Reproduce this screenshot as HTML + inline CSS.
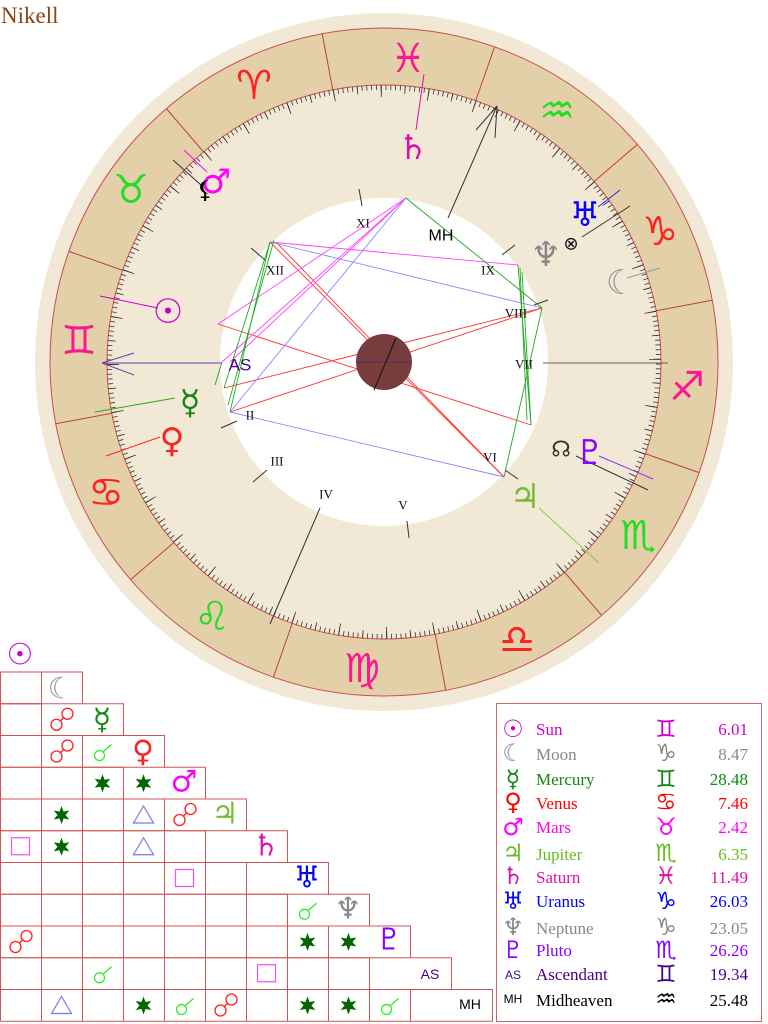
<!DOCTYPE html>
<html><head><meta charset="utf-8"><style>
html,body{margin:0;padding:0;background:#fff;width:768px;height:1024px;overflow:hidden}
svg{display:block}
.g{font-family:"DejaVu Sans",sans-serif;text-anchor:middle;dominant-baseline:central}
.r{font-family:"Liberation Serif",serif;font-size:13px;text-anchor:middle;dominant-baseline:central;fill:#111}
.t{font-family:"Liberation Serif",serif;font-size:17px}
</style></head><body>
<svg width="768" height="1024" viewBox="0 0 768 1024" xmlns="http://www.w3.org/2000/svg">
<text x="1" y="23" font-family="Liberation Serif,serif" font-size="23" fill="#8b4513">Nikell</text>

<g transform="translate(384,362)">
 <circle r="349" fill="#f2e8d6"/>
 <circle r="334" fill="#e3cfa8" stroke="#c85050" stroke-width="1"/>
 <circle r="277" fill="#f2e8d6" stroke="#c85050" stroke-width="1"/>
 <circle r="164" fill="#fff"/>
 <g transform="rotate(-100.66)" fill="none" stroke="#333">
  <circle r="274.5" stroke-width="5" stroke-dasharray="0.8 3.991"/>
  <circle r="273" stroke-width="8" stroke-dasharray="0.8 23.024"/>
  <circle r="271" stroke-width="12" stroke-dasharray="0.8 46.498"/>
 </g>
 <g stroke="#c04040" stroke-width="1">
  <line x1="277" x2="334" transform="rotate(-100.66)"/>
  <line x1="277" x2="334" transform="rotate(-130.66)"/>
  <line x1="277" x2="334" transform="rotate(-160.66)"/>
  <line x1="277" x2="334" transform="rotate(-190.66)"/>
  <line x1="277" x2="334" transform="rotate(-220.66)"/>
  <line x1="277" x2="334" transform="rotate(-250.66)"/>
  <line x1="277" x2="334" transform="rotate(-280.66)"/>
  <line x1="277" x2="334" transform="rotate(-310.66)"/>
  <line x1="277" x2="334" transform="rotate(-340.66)"/>
  <line x1="277" x2="334" transform="rotate(-10.66)"/>
  <line x1="277" x2="334" transform="rotate(-40.66)"/>
  <line x1="277" x2="334" transform="rotate(-70.66)"/>
 </g>
</g>

<!-- sign glyphs -->
<g class="g" font-size="40" font-weight="normal">
 <text x="254" y="86" fill="#ff2020">♈︎</text>
 <text x="131" y="190" fill="#22dd22">♉︎</text>
 <text x="79" y="341" fill="#ff1493">♊︎</text>
 <text x="106" y="493" fill="#ff2020">♋︎</text>
 <text x="212" y="617" fill="#22dd22">♌︎</text>
 <text x="362" y="669" fill="#ff1493">♍︎</text>
 <text x="517" y="640" fill="#ff2020">♎︎</text>
 <text x="638" y="536" fill="#22dd22">♏︎</text>
 <text x="687" y="387" fill="#ff1493">♐︎</text>
 <text x="660" y="232" fill="#ff2020">♑︎</text>
 <text x="557" y="111" fill="#22dd22">♒︎</text>
 <text x="408" y="59" fill="#ff1493">♓︎</text>
</g>

<!-- aspect lines -->
<g stroke-width="0.9" fill="none">
 <g stroke="#ff3030">
  <line x1="542" y1="308" x2="224" y2="388"/>
  <line x1="542" y1="308" x2="230" y2="412"/>
  <line x1="504" y1="477" x2="270" y2="242"/>
  <line x1="531" y1="425" x2="218" y2="324"/>
  <line x1="504" y1="477" x2="276" y2="242"/>
 </g>
 <g stroke="#ff44ff">
  <line x1="406" y1="198" x2="218" y2="324"/>
  <line x1="270" y1="242" x2="518" y2="265"/>
  <line x1="406" y1="198" x2="222" y2="362"/>
  <line x1="406" y1="198" x2="230" y2="362"/>
 </g>
 <g stroke="#8888ff">
  <line x1="504" y1="477" x2="230" y2="412"/>
  <line x1="406" y1="198" x2="230" y2="412"/>
  <line x1="270" y1="242" x2="542" y2="308"/>
 </g>
 <g stroke="#22aa22">
  <line x1="270" y1="242" x2="224" y2="388"/>
  <line x1="270" y1="242" x2="230" y2="412"/>
  <line x1="274" y1="240" x2="228" y2="405"/>
  <line x1="504" y1="477" x2="542" y2="308"/>
  <line x1="406" y1="198" x2="542" y2="308"/>
  <line x1="531" y1="425" x2="518" y2="265"/>
  <line x1="531" y1="425" x2="522" y2="272"/>
  <line x1="527" y1="420" x2="520" y2="268"/>
  <line x1="215" y1="385" x2="222" y2="362"/>
 </g>
</g>
<circle cx="384" cy="362" r="28" fill="#783c3c"/>
<g stroke="#5a2a6a" stroke-width="1"><line x1="356" y1="362" x2="412" y2="362"/></g>
<line x1="374" y1="390" x2="396" y2="338" stroke="#111" stroke-width="1"/>

<!-- house cusps -->
<g stroke="#333" stroke-width="1">
 <line x1="102" y1="363" x2="222" y2="363" stroke="#6040a0"/>
 <line x1="102" y1="363" x2="134" y2="353" stroke="#6040a0"/>
 <line x1="102" y1="363" x2="134" y2="375" stroke="#6040a0"/>
 <line x1="497" y1="106" x2="448" y2="218"/>
 <line x1="497" y1="106" x2="476" y2="130"/>
 <line x1="497" y1="106" x2="495" y2="138"/>
 <line x1="543" y1="363" x2="668" y2="363" stroke="#666"/>
 <line x1="320" y1="508" x2="270" y2="624"/>
 <line x1="359" y1="189" x2="362" y2="206"/>
 <line x1="251" y1="248" x2="265" y2="260"/>
 <line x1="221" y1="428" x2="237" y2="421"/>
 <line x1="253" y1="482" x2="267" y2="470"/>
 <line x1="407" y1="521" x2="409" y2="538"/>
 <line x1="505" y1="470" x2="518" y2="479"/>
 <line x1="534" y1="305" x2="548" y2="300"/>
 <line x1="502" y1="255" x2="515" y2="245"/>
</g>
<g class="r">
 <text x="363" y="223">XI</text><text x="275" y="270">XII</text>
 <text x="250" y="415">II</text><text x="277" y="461">III</text>
 <text x="326" y="494">IV</text><text x="403" y="505">V</text>
 <text x="490" y="457">VI</text><text x="524" y="364">VII</text>
 <text x="516" y="313">VIII</text><text x="488" y="270">IX</text>
</g>
<text x="240" y="365" font-family="Liberation Sans,sans-serif" font-size="17" fill="#440088" text-anchor="middle" dominant-baseline="central">AS</text>
<text x="441" y="236" font-family="Liberation Sans,sans-serif" font-size="16" fill="#000" text-anchor="middle" dominant-baseline="central">MH</text>

<!-- planet pointer lines -->
<g stroke-width="1">
 <line x1="100" y1="296" x2="158" y2="308" stroke="#cc00cc"/>
 <line x1="424" y1="74" x2="416" y2="130" stroke="#dd11aa"/>
 <line x1="184" y1="150" x2="207" y2="172" stroke="#ff00ff"/>
 <line x1="660" y1="268" x2="627" y2="278" stroke="#999"/>
 <line x1="620" y1="190" x2="598" y2="207" stroke="#2222ff"/>
 <line x1="599" y1="456" x2="653" y2="479" stroke="#8833ff"/>
 <line x1="539" y1="508" x2="599" y2="563" stroke="#88cc44"/>
 <line x1="95" y1="412" x2="175" y2="398" stroke="#22aa22"/>
 <line x1="106" y1="456" x2="160" y2="437" stroke="#ff2020"/>
 <line x1="173" y1="160" x2="201" y2="185" stroke="#333"/>
 <line x1="582" y1="237" x2="630" y2="206" stroke="#333"/>
 <line x1="576" y1="456" x2="648" y2="490" stroke="#333"/>
</g>
<g class="g" font-size="34">
 <text x="168" y="312" fill="#cc00cc">☉︎</text>
 <text x="621" y="283" fill="#999">☾︎</text>
 <text x="190" y="403" fill="#118811">☿︎</text>
 <text x="172" y="441" fill="#ff2020">♀︎</text>
 <text x="216" y="182" fill="#ff00ff">♂︎</text>
 <text x="525" y="497" fill="#77bb33">♃︎</text>
 <text x="413" y="148" fill="#dd11aa">♄︎</text>
 <text x="585" y="215" fill="#0000ff">♅︎</text>
 <text x="546" y="255" fill="#888">♆︎</text>
 <text x="590" y="453" fill="#8800ff">♇︎</text>
 <text x="561" y="450" fill="#333" font-size="22">☊︎</text>
 <text x="571" y="244" fill="#111" font-size="18">⊗</text>
 <text x="205" y="190" fill="#000" font-size="24">⚸</text>
</g>

<!-- aspect grid -->
<g fill="none" stroke="#cc5555" stroke-width="1">
 <rect x="0.5" y="672" width="41" height="31.75"/>
 <path d="M0.5 703.75H82.5V672H41.5"/>
 <path d="M0.5 735.5H123.5V703.75H82.5"/>
 <path d="M0.5 767.25H164.5V735.5H123.5"/>
 <path d="M0.5 799H205.5V767.25H164.5"/>
 <path d="M0.5 830.75H246.5V799H205.5"/>
 <path d="M0.5 862.5H287.5V830.75H246.5"/>
 <path d="M0.5 894.25H328.5V862.5H287.5"/>
 <path d="M0.5 926H369.5V894.25H328.5"/>
 <path d="M0.5 957.75H410.5V926H369.5"/>
 <path d="M0.5 989.5H451.5V957.75H410.5"/>
 <path d="M0.5 1021.25H492.5V989.5H451.5"/>
 <path d="M0.5 672V1021.25M41.5 703.75V1021.25M82.5 735.5V1021.25M123.5 767.25V1021.25M164.5 799V1021.25M205.5 830.75V1021.25M246.5 862.5V1021.25M287.5 894.25V1021.25M328.5 926V1021.25M369.5 957.75V1021.25M410.5 989.5V1021.25"/>
 <path d="M0.5 703.75H41.5M0.5 735.5H82.5M0.5 767.25H123.5M0.5 799H164.5M0.5 830.75H205.5M0.5 862.5H246.5M0.5 894.25H287.5M0.5 926H328.5M0.5 957.75H369.5M0.5 989.5H410.5"/>
</g>
<g class="g" font-size="30">
 <text x="20" y="655" fill="#cc00cc">☉︎</text>
 <text x="61" y="689" fill="#999">☾︎</text>
 <text x="102" y="720" fill="#118811">☿︎</text>
 <text x="143" y="752" fill="#ff2020">♀︎</text>
 <text x="184" y="782" fill="#ff00ff">♂︎</text>
 <text x="225" y="814" fill="#77bb33">♃︎</text>
 <text x="266" y="846" fill="#dd11aa">♄︎</text>
 <text x="307" y="878" fill="#0000ff">♅︎</text>
 <text x="348" y="909" fill="#888">♆︎</text>
 <text x="389" y="940" fill="#8800ff">♇︎</text>
</g>
<text x="430" y="974" font-family="Liberation Sans,sans-serif" font-size="14" fill="#440088" text-anchor="middle" dominant-baseline="central">AS</text>
<text x="470" y="1004" font-family="Liberation Sans,sans-serif" font-size="14" fill="#000" text-anchor="middle" dominant-baseline="central">MH</text>

<defs>
 <g id="op" fill="none" stroke="#ff2020" stroke-width="1.3"><circle cx="-5" cy="5" r="5.5"/><circle cx="6" cy="-6" r="5.5"/><line x1="-1" y1="1" x2="2" y2="-2"/></g>
 <g id="cj" fill="none" stroke="#22ee22" stroke-width="1.2"><circle cx="-3" cy="4" r="5"/><line x1="1" y1="0" x2="9" y2="-7"/></g>
 <g id="tr" fill="none" stroke="#7777ee" stroke-width="1.2"><polygon points="0,-9 -10,8 10,8"/></g>
 <g id="sq" fill="none" stroke="#ee55ee" stroke-width="1.2"><rect x="-9" y="-9" width="18" height="17"/></g>
 <g id="sx" fill="#006600"><polygon points="0,-9 2,-3.5 7.8,-4.5 4,0 7.8,4.5 2,3.5 0,9 -2,3.5 -7.8,4.5 -4,0 -7.8,-4.5 -2,-3.5"/></g>
</defs>
<use href="#op" x="61.5" y="719.75"/>
<use href="#op" x="61.5" y="751.5"/>
<use href="#cj" x="102.5" y="751.5"/>
<use href="#sx" x="102.5" y="783.25"/>
<use href="#sx" x="143.5" y="783.25"/>
<use href="#sx" x="61.5" y="815"/>
<use href="#tr" x="143.5" y="815"/>
<use href="#op" x="184.5" y="815"/>
<use href="#sq" x="20.5" y="846.75"/>
<use href="#sx" x="61.5" y="846.75"/>
<use href="#tr" x="143.5" y="846.75"/>
<use href="#sq" x="184.5" y="878.5"/>
<use href="#cj" x="307.5" y="910.25"/>
<use href="#op" x="20.5" y="942"/>
<use href="#sx" x="307.5" y="942"/>
<use href="#sx" x="348.5" y="942"/>
<use href="#cj" x="102.5" y="973.75"/>
<use href="#sq" x="266.5" y="973.75"/>
<use href="#tr" x="61.5" y="1005.5"/>
<use href="#sx" x="143.5" y="1005.5"/>
<use href="#cj" x="184.5" y="1005.5"/>
<use href="#op" x="225.5" y="1005.5"/>
<use href="#sx" x="307.5" y="1005.5"/>
<use href="#sx" x="348.5" y="1005.5"/>
<use href="#cj" x="389.5" y="1005.5"/>

<!-- table -->
<rect x="496.5" y="703.5" width="265" height="318" fill="#fff" stroke="#cc6666" stroke-width="1"/>
<g class="t">
 <g fill="#cc00cc"><text x="536" y="735">Sun</text><text x="748" y="735" text-anchor="end">6.01</text></g>
 <g fill="#888"><text x="536" y="760">Moon</text><text x="748" y="760" text-anchor="end">8.47</text></g>
 <g fill="#118811"><text x="536" y="785">Mercury</text><text x="748" y="785" text-anchor="end">28.48</text></g>
 <g fill="#ff0000"><text x="536" y="809">Venus</text><text x="748" y="809" text-anchor="end">7.46</text></g>
 <g fill="#ff00ff"><text x="536" y="833">Mars</text><text x="748" y="833" text-anchor="end">2.42</text></g>
 <g fill="#66bb22"><text x="536" y="860">Jupiter</text><text x="748" y="860" text-anchor="end">6.35</text></g>
 <g fill="#dd11aa"><text x="536" y="883">Saturn</text><text x="748" y="883" text-anchor="end">11.49</text></g>
 <g fill="#0000ff"><text x="536" y="907">Uranus</text><text x="748" y="907" text-anchor="end">26.03</text></g>
 <g fill="#888"><text x="536" y="934">Neptune</text><text x="748" y="934" text-anchor="end">23.05</text></g>
 <g fill="#8800ff"><text x="536" y="956">Pluto</text><text x="748" y="956" text-anchor="end">26.26</text></g>
 <g fill="#440088"><text x="536" y="980">Ascendant</text><text x="748" y="980" text-anchor="end">19.34</text></g>
 <g fill="#000"><text x="536" y="1006">Midheaven</text><text x="748" y="1006" text-anchor="end">25.48</text></g>
</g>
<g class="g" font-size="24">
 <text x="513" y="729" fill="#cc00cc">☉︎</text><text x="666" y="729" fill="#cc00cc">♊︎</text>
 <text x="513" y="753" fill="#888">☾︎</text><text x="666" y="753" fill="#888">♑︎</text>
 <text x="513" y="779" fill="#118811">☿︎</text><text x="666" y="779" fill="#118811">♊︎</text>
 <text x="513" y="802" fill="#ff0000">♀︎</text><text x="666" y="802" fill="#ff0000">♋︎</text>
 <text x="513" y="827" fill="#ff00ff">♂︎</text><text x="666" y="827" fill="#ff00ff">♉︎</text>
 <text x="513" y="853" fill="#66bb22">♃︎</text><text x="666" y="853" fill="#66bb22">♏︎</text>
 <text x="513" y="876" fill="#dd11aa">♄︎</text><text x="666" y="876" fill="#dd11aa">♓︎</text>
 <text x="513" y="901" fill="#0000ff">♅︎</text><text x="666" y="901" fill="#0000ff">♑︎</text>
 <text x="513" y="927" fill="#888">♆︎</text><text x="666" y="927" fill="#888">♑︎</text>
 <text x="513" y="950" fill="#8800ff">♇︎</text><text x="666" y="950" fill="#8800ff">♏︎</text>
 <text x="666" y="974" fill="#440088">♊︎</text>
 <text x="666" y="999" fill="#000">♒︎</text>
</g>
<text x="513" y="975" font-family="Liberation Sans,sans-serif" font-size="12" fill="#440088" text-anchor="middle" dominant-baseline="central">AS</text>
<text x="513" y="999" font-family="Liberation Sans,sans-serif" font-size="12" fill="#000" text-anchor="middle" dominant-baseline="central">MH</text>
</svg>
</body></html>
